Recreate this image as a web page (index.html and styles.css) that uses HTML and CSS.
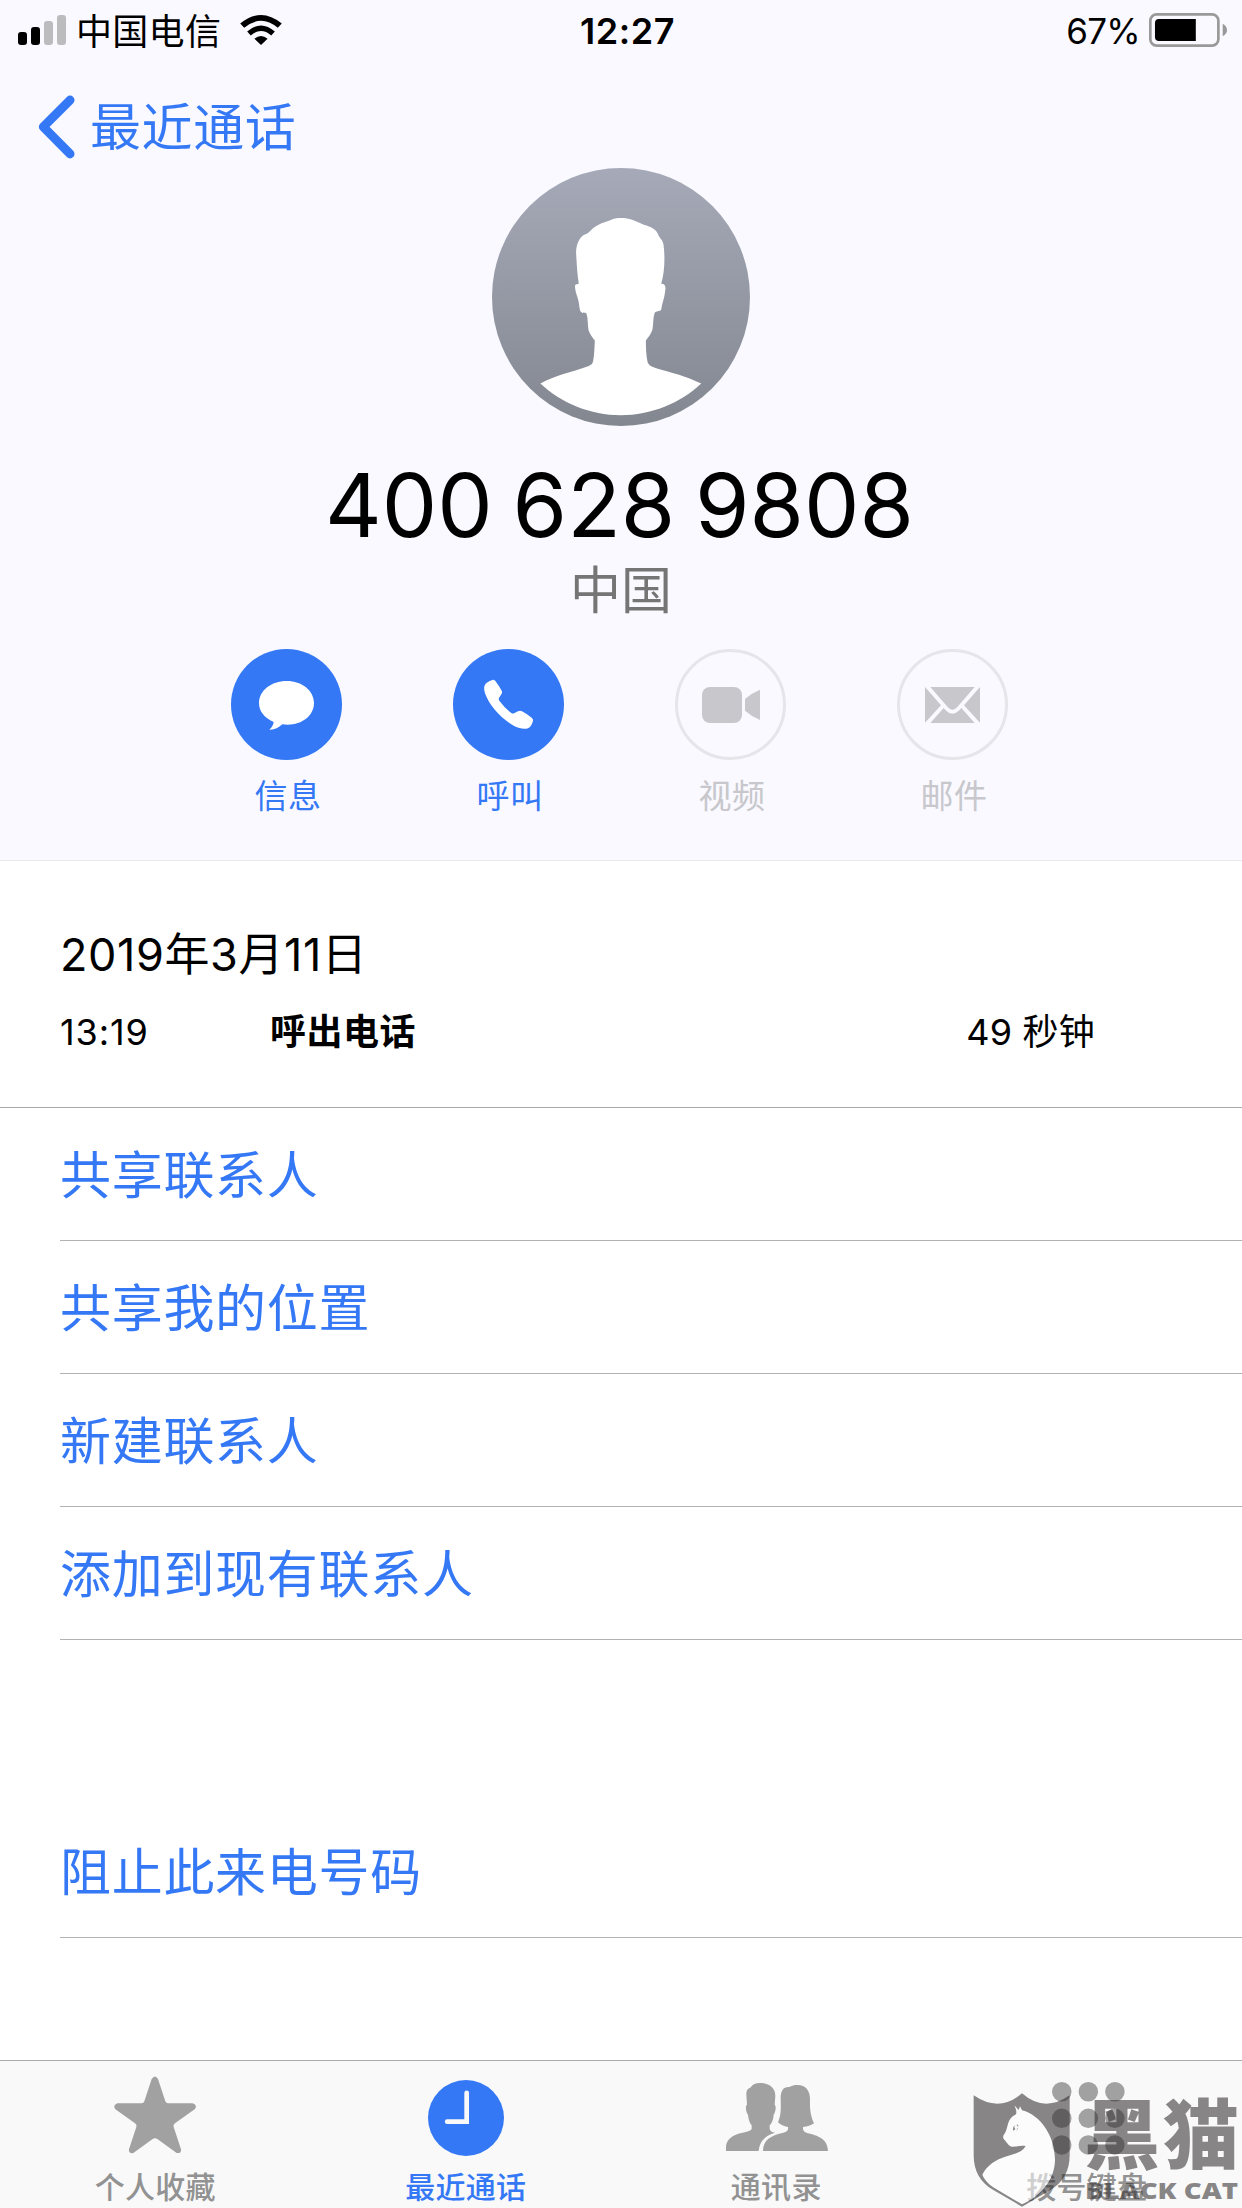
FILE: index.html
```html
<!DOCTYPE html>
<html lang="zh-CN">
<head>
    <meta charset="utf-8">
    <title>最近通话</title>
    <link rel="stylesheet" href="styles.css">
</head>
<body>
    <div class="screen">
        <header class="header">
            <div class="status-bar">
                <div class="status-left">
                    <svg class="signal" viewBox="54 45 144 90">
                        <rect x="54" y="96" width="27" height="39" rx="9"/>
                        <rect x="93" y="81" width="27" height="54" rx="9"/>
                        <rect class="off" x="132" y="63" width="27" height="72" rx="9"/>
                        <rect class="off" x="171" y="45" width="27" height="90" rx="9"/>
                    </svg>
                    <span class="carrier">中国电信</span>
                    <svg class="wifi" viewBox="720 44 126 91">
                        <path d="M720 70Q783 18 846 70L834 83Q783 40 732 83Z"/>
                        <path d="M741 94Q783 57 825 94L814 106Q783 79 752 106Z"/>
                        <path d="M763 116Q783 100 803 116L783 135Z"/>
                    </svg>
                </div>
                <span class="clock">12:27</span>
                <div class="status-right">
                    <span class="percent">67%</span>
                    <svg class="battery" viewBox="327 39 235 102">
                        <rect x="331" y="43" width="205" height="94" rx="19" fill="none" stroke="#999" stroke-width="8"/>
                        <path d="M357 57H468V123H357Q345 123 345 111V69Q345 57 357 57Z"/>
                        <path d="M549 71Q562 78 562 90T549 109Z" fill="#999"/>
                    </svg>
                </div>
            </div>

            <div class="nav">
                <svg class="chevron" viewBox="114 284 112 191">
                    <path d="M211 298L130 379L211 461" fill="none" stroke="#3478f6" stroke-width="27" stroke-linecap="round" stroke-linejoin="round"/>
                </svg>
                <span>最近通话</span>
            </div>

            <svg class="avatar" viewBox="37 24 773 773">
                <defs>
                    <linearGradient id="avatarFill" x1="0" y1="0" x2="0" y2="1">
                        <stop offset="0" stop-color="#a6aab8"/>
                        <stop offset="1" stop-color="#838790"/>
                    </linearGradient>
                </defs>
                <circle cx="423.500" cy="410.500" r="386.500" fill="url(#avatarFill)"/>
                <path fill="#fff" d="M425 174C448 174 464 182 492 194C514 200 529 208 535 223C539 235 549 238 551 255C556 292 554 338 544 371C556 371 558 379 556 392C554 413 547 427 544 449C541 454 528 452 524 459C519 474 521 490 518 507C514 521 505 531 498 541C498 563 499 585 503 605C507 616 517 619 527 623C573 637 617 646 664 670C602 729 513 765 423 765C333 765 244 729 182 670C229 644 278 635 325 618C334 614 339 610 340 602C344 581 344 561 345 541C337 530 330 521 326 509C323 491 325 474 320 460C315 456 304 460 301 452C298 438 298 425 293 411C287 396 283 374 288 373L297 371C292 340 291 310 289 280C288 254 299 230 315 223C328 221 333 206 351 197C367 187 378 186 395 179C404 175 415 174 425 174Z"/>
            </svg>

            <h1 class="number">400 628 9808</h1>
            <p class="region">中国</p>

            <div class="actions">
                <div class="action">
                    <svg viewBox="63 57 333 333">
                        <circle cx="229.500" cy="223.500" r="166.500" fill="#3478f6"/>
                        <path fill="#fff" d="M230 153C276 153 312 182 312 219C312 260 270 290 217 283C205 294 192 300 178 299C187 291 190 284 191 276C162 263 147 243 147 219C147 182 184 153 230 153Z"/>
                    </svg>
                    <span>信息</span>
                </div>
                <div class="action">
                    <svg viewBox="729 57 333 333">
                        <circle cx="895.500" cy="223.500" r="166.500" fill="#3478f6"/>
                        <path fill="#fff" d="M845 151Q851 147 856 153Q867 167 875 182Q878 187 874 193L867 204Q865 208 868 212Q884 234 904 249Q908 252 912 250L924 244Q930 241 936 244Q951 252 965 263Q970 267 969 272Q967 283 960 291C950 300 930 297 914 289C873 266 838 227 825 190C820 173 820 160 845 151Z"/>
                    </svg>
                    <span>呼叫</span>
                </div>
                <div class="action disabled">
                    <svg viewBox="75 57 333 333">
                        <circle cx="241.500" cy="223.500" r="162" fill="none" stroke="#e5e5ea" stroke-width="9"/>
                        <rect x="156" y="171" width="120" height="108" rx="24"/>
                        <path d="M285 207Q307 188 330 179V270Q307 261 285 242Z"/>
                    </svg>
                    <span>视频</span>
                </div>
                <div class="action disabled">
                    <svg viewBox="741 57 333 333">
                        <circle cx="907.500" cy="223.500" r="162" fill="none" stroke="#e5e5ea" stroke-width="9"/>
                        <path d="M841 171H974L922 231Q907 248 893 231Z"/>
                        <path d="M825 171L873 226L825 278ZM990 171V278L942 226Z"/>
                        <path d="M841 279L881 234L887 241Q907 262 928 241L934 234L974 279Z"/>
                    </svg>
                    <span>邮件</span>
                </div>
            </div>
        </header>

        <section class="history">
            <div class="date">2019年3月11日</div>
            <div class="call">
                <span class="call-time">13:19</span>
                <span class="call-type">呼出电话</span>
                <span class="call-length">49 秒钟</span>
            </div>
        </section>

        <ul class="menu">
            <li>共享联系人</li>
            <li>共享我的位置</li>
            <li>新建联系人</li>
            <li>添加到现有联系人</li>
            <li class="block">阻止此来电号码</li>
        </ul>

        <nav class="tabs">
            <div class="tab">
                <svg class="icon-star" viewBox="162 78 246 232">
                    <path d="M275 86Q285 71 294 86L316 153Q318 159 324 159H397Q413 164 405 176L345 219Q339 223 341 230L363 297Q364 310 350 308L292 266Q285 261 278 266L220 308Q205 311 207 297L229 230Q231 223 225 219L166 177Q157 165 172 159H245Q251 159 253 153Z"/>
                </svg>
                <span>个人收藏</span>
            </div>
            <div class="tab active">
                <svg class="icon-clock" viewBox="1105 91 226 226">
                    <circle cx="1218" cy="204" r="113"/>
                    <path d="M1220 129V215H1162" fill="none" stroke="#f9f9f9" stroke-width="14" stroke-linecap="round"/>
                </svg>
                <span>最近通话</span>
            </div>
            <div class="tab">
                <svg class="icon-people" viewBox="138 99 306 204">
                    <path d="M239 99C265 99 286 111 286 138L284 164C290 168 286 190 281 194C280 210 275 220 269 226V236C270 243 276 246 285 248C255 256 238 276 236 303H138V292C138 268 158 255 184 249C205 244 214 241 215 236V226C209 219 205 207 204 194C198 187 195 168 201 164L199 133C199 120 204 115 211 113C218 103 227 99 239 99Z"/>
                    <path d="M325 111C334 111 334 105 353 105C377 105 390 122 390 147C389 178 392 199 402 220C395 226 381 230 369 231C368 240 371 246 381 249C414 256 444 268 444 303H249C249 268 275 256 310 248C321 246 326 240 324 231C312 229 300 224 294 217C303 196 303 180 302 146C302 122 310 111 325 111Z"/>
                </svg>
                <span>通讯录</span>
            </div>
            <div class="tab">
                <svg class="icon-keypad" viewBox="334 96 217 217">
                    <circle cx="363" cy="125" r="29"/><circle cx="442" cy="125" r="29"/><circle cx="521" cy="125" r="29"/>
                    <circle cx="363" cy="204" r="29"/><circle cx="442" cy="204" r="29"/><circle cx="521" cy="204" r="29"/>
                    <circle cx="363" cy="283" r="29"/><circle cx="442" cy="283" r="29"/><circle cx="521" cy="283" r="29"/>
                </svg>
                <span>拨号键盘</span>
            </div>
        </nav>

        <div class="watermark">
            <svg class="shield" viewBox="99 129 291 342">
                <path fill="#2f2b2c" d="M101 136Q178 189 246 130Q313 189 389 136V315C389 362 370 397 331 420L246 470L160 420C120 397 101 362 101 315Z"/>
                <path fill="#fff" d="M246 463L167 416C147 404 135 392 127 374C142 346 165 330 200 319C232 309 247 306 257 288C242 285 229 291 215 290C206 288 201 277 193 269C188 264 188 258 193 252C202 240 202 218 211 206Q217 198 228 193C231 184 227 176 223 166L236 180L240 169L246 181C302 195 345 259 345 330C344 391 300 440 246 463Z"/>
                <path fill="#2f2b2c" d="M224 225Q218 231 219 242L226 238L223 232ZM229 224L235 231L228 242Q237 237 234 224Z"/>
            </svg>
            <div class="brand">
                <span class="brand-cn">黑猫</span>
                <span class="brand-en">BLACK CAT</span>
            </div>
        </div>
    </div>
</body>
</html>
```

FILE: styles.css
```css
* { box-sizing: border-box; margin: 0; padding: 0; }
body { width: 1242px; background: #fff; color: #000; font-family: Inter, "Noto Sans CJK SC", sans-serif; }
svg { display: block; flex-shrink: 0; }

.screen { position: relative; display: flex; flex-direction: column; height: 2208px; overflow: hidden; }

/* header */
.header { height: 861px; background: #f9f9ff; border-bottom: 1px solid #e9e9ee; }
.status-bar { display: grid; grid-template-columns: 1fr auto 1fr; align-items: center; height: 60px; padding: 0 15px 0 18px; }
.status-left, .status-right { display: flex; align-items: center; }
.status-right { justify-content: flex-end; }
.signal { width: 48px; height: 30px; }
.signal .off { fill: #bcbcbf; }
.carrier { margin-left: 10px; padding-top: 4px; font-size: 36px; line-height: 56px; letter-spacing: 0.3px; }
.wifi { width: 42px; height: 30px; margin-left: 19px; }
.clock { padding: 3px 0 0 10px; font-size: 36px; font-weight: 600; line-height: 57px; letter-spacing: 0.5px; }
.percent { padding-top: 3px; font-size: 35px; line-height: 57px; letter-spacing: -0.7px; }
.battery { width: 78px; height: 34px; margin-left: 9px; }

.nav { display: flex; align-items: center; height: 108px; padding: 26px 0 0 38px; font-size: 51px; line-height: 79px; letter-spacing: 0.6px; color: #3478f6; }
.nav span { padding-top: 1px; }
.chevron { width: 37px; height: 64px; margin-right: 15px; }

.avatar { width: 258px; height: 258px; margin: 0 auto; }
.number { margin-top: 27px; padding-right: 3px; font-size: 88px; font-weight: 400; line-height: 104px; text-align: center; word-spacing: -5px; }
.region { margin: -3px 0 21px; font-size: 51px; line-height: 74px; text-align: center; color: #757575; }

.actions { display: flex; gap: 111px; padding-left: 231px; }
.action { display: flex; flex-direction: column; align-items: center; width: 111px; font-size: 33px; line-height: 48px; letter-spacing: 0.6px; color: #3478f6; }
.action svg { width: 111px; height: 111px; margin-bottom: 12px; }
.action span { padding-left: 3px; }
.action.disabled { color: #c7c7cc; }
.action.disabled svg { fill: #c7c7cc; }

/* call history */
.history { height: 247px; padding: 64px 60px 0; border-bottom: 1px solid #aaa; }
.date { font-size: 45px; line-height: 60px; letter-spacing: 0.6px; }
.call { display: flex; margin-top: 20px; font-size: 36px; line-height: 54px; }
.call-time { width: 210px; letter-spacing: 0.9px; }
.call-type { font-weight: 600; letter-spacing: 0.5px; }
.call-length { margin-left: auto; margin-right: 87px; letter-spacing: 0.2px; }

/* menu */
.menu { flex: 1; list-style: none; padding-left: 60px; font-size: 51px; letter-spacing: 0.7px; line-height: 136px; color: #3478f6; }
.menu li { height: 133px; border-bottom: 1px solid #b2b2b2; }
.menu .block { margin-top: 165px; }

/* tab bar */
.tabs { display: flex; height: 148px; background: #f9f9f9; border-top: 1px solid #aaa; }
.tab { display: flex; flex: 1; flex-direction: column; align-items: center; font-size: 30px; font-weight: 500; line-height: 42px; letter-spacing: 0.3px; color: #929292; fill: #a1a1a1; }
.tab.active { color: #3478f6; fill: #3478f6; }
.tab svg { height: 78px; margin: 15px 0 12px; }
.tab .icon-star { width: 82px; }
.tab .icon-clock { width: 76px; height: 76px; margin: 19px 0 10px; }
.tab .icon-people { width: 102px; height: 68px; margin: 22px 0 15px 2px; }
.tab .icon-keypad { width: 73px; height: 73px; margin: 21px 0 11px 3px; }

/* watermark over the tab bar */
.watermark { position: absolute; right: 0; bottom: 0; display: flex; width: 269px; height: 115px; opacity: 0.56; color: #2f2b2c; }
.shield { width: 97px; height: 114px; }
.brand { display: flex; flex-direction: column; margin-left: 14px; white-space: nowrap; }
.brand-cn { font-size: 76px; font-weight: 900; line-height: 85px; letter-spacing: 3px; }
.brand-en { align-self: flex-start; margin: -1px 0 0 1px; font-family: "Open Sans", sans-serif; font-size: 23px; font-weight: 800; line-height: 26px; transform: scaleX(1.2); transform-origin: left; }
```
